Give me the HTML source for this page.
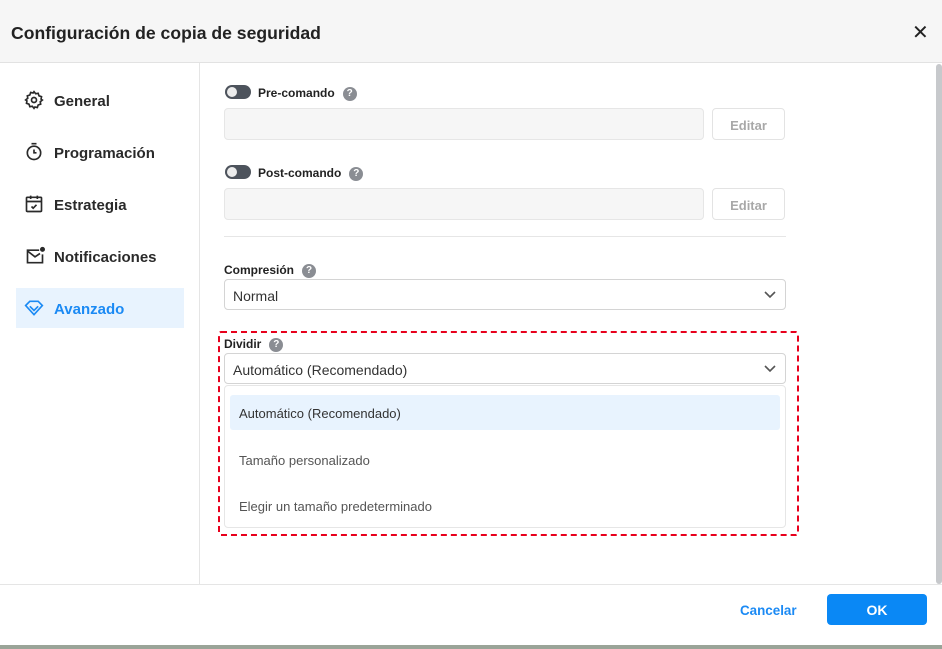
<!DOCTYPE html>
<html><head><meta charset="utf-8"><style>
*{box-sizing:border-box;margin:0;padding:0}
body{width:942px;height:649px;background:#fff;font-family:"Liberation Sans",sans-serif;position:relative;overflow:hidden;color:#222}
.hdr{position:absolute;left:0;top:0;width:942px;height:63px;background:#f6f6f6;border-bottom:1px solid #e2e2e2}
.hdr h1{position:absolute;left:11px;top:23px;font-size:17.6px;font-weight:bold;color:#222}
.x{position:absolute;left:912px;top:20px;font-size:20px;color:#222}
.side{position:absolute;left:0;top:63px;width:200px;height:521px;border-right:1px solid #e5e5e5}
.item{position:absolute;left:16px;width:168px;height:40px;font-size:15px;font-weight:bold;color:#2a2a2a}
.item span{position:absolute;left:38px;top:13px}
.item svg{position:absolute;left:8px;top:10px}
.act{background:#e8f3fe;color:#1b8af4}
.lbl{position:absolute;font-size:12px;font-weight:bold;color:#222}
.q{display:inline-block;width:14px;height:14px;border-radius:50%;background:#8a8d93;color:#fff;font-size:10px;text-align:center;line-height:14px;vertical-align:1px;margin-left:8px}
.tog{position:absolute;width:26px;height:14px;border-radius:7px;background:#4d535c}
.tog:after{content:"";position:absolute;left:2px;top:2px;width:10px;height:10px;border-radius:50%;background:#ececec}
.inp{position:absolute;left:224px;width:480px;height:32px;background:#f6f6f6;border:1px solid #e6e6e6;border-radius:4px}
.btn{position:absolute;left:712px;width:73px;height:32px;border:1px solid #e3e3e3;border-radius:4px;font-size:13px;font-weight:bold;color:#a8a8a8;text-align:center;line-height:33px}
.sel{position:absolute;left:224px;width:562px;height:31px;border:1px solid #d4d4d4;border-radius:4px;font-size:14px;color:#333;padding:8px 0 0 8px}
.sel svg{position:absolute;right:8px;top:10px}
.dd{position:absolute;left:224px;top:385px;width:562px;height:143px;border:1px solid #e6e6e6;border-radius:4px;background:#fff}
.opt{position:absolute;left:5px;width:550px;height:35px;font-size:13px;color:#555;padding:11px 0 0 9px}
</style></head><body>
<div class="hdr"><h1>Configuración de copia de seguridad</h1><div class="x">✕</div></div>
<div class="side">
<div class="item" style="top:17px"><svg width="20" height="20" viewBox="0 0 24 24" fill="none" stroke="#2a2a2a" stroke-width="2"><circle cx="12" cy="12" r="3"/><path d="M12 2l2 2.5 3-.5 1 3 3 1-.5 3L22 12l-2.5 2 .5 3-3 1-1 3-3-.5L12 22l-2-2.5-3 .5-1-3-3-1 .5-3L2 12l2.5-2L4 7l3-1 1-3 3 .5z"/></svg><span>General</span></div>
<div class="item" style="top:69px"><svg width="20" height="20" viewBox="0 0 24 24" fill="none" stroke="#2a2a2a" stroke-width="2"><circle cx="12" cy="13" r="8"/><path d="M9 2h6M12 9v4h3"/></svg><span>Programación</span></div>
<div class="item" style="top:121px"><svg width="20" height="20" viewBox="0 0 24 24" fill="none" stroke="#2a2a2a" stroke-width="2"><rect x="3" y="4" width="18" height="17" rx="1"/><path d="M3 9h18M8 2v4M16 2v4M9 15l2 2 4-4"/></svg><span>Estrategia</span></div>
<div class="item" style="top:173px"><svg width="22" height="20" viewBox="0 0 24 24" fill="none" stroke="#2a2a2a" stroke-width="2"><path d="M17 5H3v15h18V10"/><path d="M3 6l9 7 6-4"/><circle cx="21" cy="4" r="2" fill="#2a2a2a"/></svg><span>Notificaciones</span></div>
<div class="item act" style="top:225px"><svg width="20" height="20" viewBox="0 0 24 24" fill="none" stroke="#1b8af4" stroke-width="2"><path d="M2 9l5-5h10l5 5-10 11z M7 10l5 5 5-5"/></svg><span>Avanzado</span></div>
</div>
<div style="position:absolute;left:936px;top:64px;width:6px;height:520px;background:#c7c9cc;border-radius:3px"></div>
<div class="tog" style="left:225px;top:85px"></div><div class="lbl" style="left:258px;top:86px">Pre-comando<span class="q">?</span></div>
<div class="inp" style="top:108px"></div><div class="btn" style="top:108px">Editar</div>
<div class="tog" style="left:225px;top:165px"></div><div class="lbl" style="left:258px;top:166px">Post-comando<span class="q">?</span></div>
<div class="inp" style="top:188px"></div><div class="btn" style="top:188px">Editar</div>
<div style="position:absolute;left:224px;top:236px;width:562px;height:1px;background:#e6e6e6"></div>
<div class="lbl" style="left:224px;top:263px">Compresión<span class="q">?</span></div>
<div class="sel" style="top:279px">Normal<svg width="14" height="10" viewBox="0 0 14 10" fill="none" stroke="#555" stroke-width="1.6"><path d="M2 2l5 5 5-5"/></svg></div>
<div style="position:absolute;left:218px;top:331px;width:581px;height:205px;border:2px dashed #e8001c;border-radius:3px"></div>
<div class="lbl" style="left:224px;top:337px">Dividir<span class="q">?</span></div>
<div class="sel" style="top:353px">Automático (Recomendado)<svg width="14" height="10" viewBox="0 0 14 10" fill="none" stroke="#555" stroke-width="1.6"><path d="M2 2l5 5 5-5"/></svg></div>
<div class="dd">
<div class="opt" style="top:9px;background:#e8f3fe;color:#333;border-radius:3px">Automático (Recomendado)</div>
<div class="opt" style="top:56px">Tamaño personalizado</div>
<div class="opt" style="top:102px">Elegir un tamaño predeterminado</div>
</div>
<div style="position:absolute;left:0;top:584px;width:942px;height:1px;background:#e5e5e5"></div>
<div style="position:absolute;left:740px;top:603px;font-size:13.4px;font-weight:bold;color:#1b8af4">Cancelar</div>
<div style="position:absolute;left:827px;top:594px;width:100px;height:31px;background:#0a88f5;border-radius:4px;color:#fff;font-weight:bold;font-size:14px;text-align:center;line-height:32px">OK</div>
<div style="position:absolute;left:0;top:645px;width:942px;height:4px;background:#9aa498"></div>
</body></html>
